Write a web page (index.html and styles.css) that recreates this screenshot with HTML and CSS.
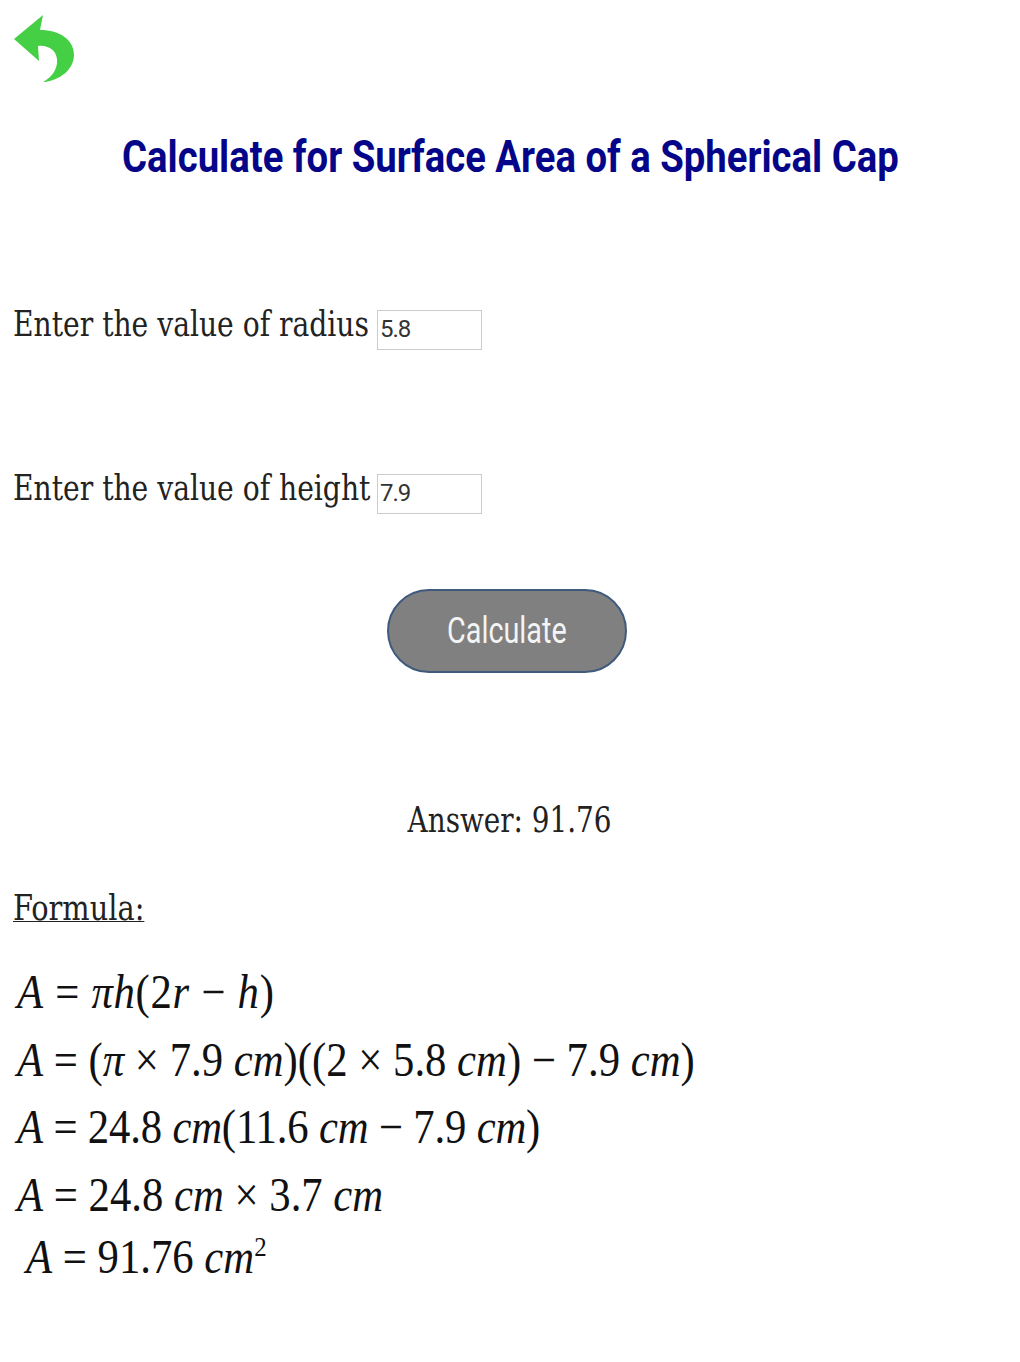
FILE: index.html
```html
<!DOCTYPE html>
<html lang="en">
<head>
<meta charset="UTF-8" />
<meta name="viewport" content="width=device-width, initial-scale=1" />
<title>Surface Area of a Spherical Cap</title>
<link rel="stylesheet" href="styles.css">
</head>
<body>

<a class="backLink" href="#" aria-label="Back">
  <svg class="backIcon" viewBox="0 0 62 70" width="62" height="70">
    <path d="M29 0 L0 24 L25 46 L24 31 C34 30 42 35 43 44 C44 54 38 62 29 67 C46 66 60 54 60 40 C60 25 46 15 26 15 Z" fill="#44cf44"/>
  </svg>
</a>

<h1 class="pageTitle"><span>Calculate for Surface Area of a Spherical Cap</span></h1>

<div class="fieldRow">
  <label class="fieldLabel" for="radius">Enter the value of radius</label>
  <input class="fieldInput" id="radius" type="text" value="5.8" />
</div>

<div class="fieldRow fieldRowHeight">
  <label class="fieldLabel" for="height">Enter the value of height</label>
  <input class="fieldInput" id="height" type="text" value="7.9" />
</div>

<div class="buttonRow">
  <button class="calcButton"><span>Calculate</span></button>
</div>

<p class="answer"><span>Answer: 91.76</span></p>

<p class="formulaTitle"><span>Formula:</span></p>

<div class="formula">
  <div class="mathLine mathFirst"><i>A</i> = <i>πh</i>(2<i>r</i> − <i>h</i>)</div>
  <div class="mathLine"><i>A</i> = (<i>π</i> × 7.9 <i>cm</i>)((2 × 5.8 <i>cm</i>) − 7.9 <i>cm</i>)</div>
  <div class="mathLine mathThird"><i>A</i> = 24.8 <i>cm</i>(11.6 <i>cm</i> − 7.9 <i>cm</i>)</div>
  <div class="mathLine"><i>A</i> = 24.8 <i>cm</i> × 3.7 <i>cm</i></div>
  <div class="mathLine mathLast"><i>A</i> = 91.76 <i>cm</i><sup>2</sup></div>
</div>

</body>
</html>
```

FILE: styles.css
```css
body {
  margin: 0;
  background: #fff;
  font-family: "DejaVu Serif", serif;
  color: #222;
}

.backLink {
  display: block;
  height: 70px;
  padding: 15px 0 0 14px;
}

.backIcon {
  display: block;
}

.pageTitle {
  margin: 46px 0 0;
  text-align: center;
  font-family: Roboto, sans-serif;
  font-size: 44px;
  line-height: 52px;
  font-weight: 700;
  color: #05058a;
}

.pageTitle span {
  display: inline-block;
  white-space: nowrap;
  transform: scaleX(0.87);
}

.fieldRow {
  display: flex;
  height: 40px;
  margin: 127px 0 0 13px;
}

.fieldRowHeight {
  margin-top: 124px;
}

.fieldLabel {
  width: 364px;
  margin-top: -10px;
  font-size: 36px;
  font-stretch: condensed;
  line-height: 48px;
  white-space: nowrap;
  transform: scaleX(0.87);
  transform-origin: left center;
}

.fieldInput {
  box-sizing: border-box;
  width: 105px;
  height: 40px;
  padding: 0 2px 2px;
  border: 1px solid #ccc;
  font-family: Roboto, sans-serif;
  font-size: 24px;
  color: #333;
  letter-spacing: -1px;
}

.buttonRow {
  display: flex;
  justify-content: center;
  margin-top: 75px;
  padding-right: 6px;
}

.calcButton {
  width: 240px;
  height: 84px;
  border: 2px solid #3f5a7c;
  border-radius: 42px;
  background: #808080;
  color: #f4f4f4;
  font-family: Roboto, sans-serif;
  font-size: 36px;
}

.calcButton span {
  display: inline-block;
  transform: scaleX(0.8);
}

.answer {
  margin: 123px 0 0;
  text-align: center;
  font-size: 36px;
  font-stretch: condensed;
  line-height: 48px;
}

.answer span {
  display: inline-block;
  transform: scaleX(0.86);
}

.formulaTitle {
  margin: 40px 0 0 13px;
  font-size: 36px;
  font-stretch: condensed;
  line-height: 48px;
}

.formulaTitle span {
  display: inline-block;
  text-decoration: underline;
  text-decoration-thickness: 1px;
  transform: scaleX(0.89);
  transform-origin: left center;
}

.formula {
  margin: 26px 0 0 17px;
  font-family: "Liberation Serif", serif;
}

.mathLine {
  height: 67.5px;
  font-size: 48px;
  line-height: 67px;
  color: #111;
  white-space: nowrap;
  transform: scaleX(0.89);
  transform-origin: left center;
}

.mathFirst {
  letter-spacing: 0.8px;
}

.mathThird {
  letter-spacing: -0.2px;
}

.mathLast {
  height: 60px;
  margin: -5px 0 0 9px;
}

.mathLine sup {
  font-size: 28px;
  line-height: 0;
}
```
